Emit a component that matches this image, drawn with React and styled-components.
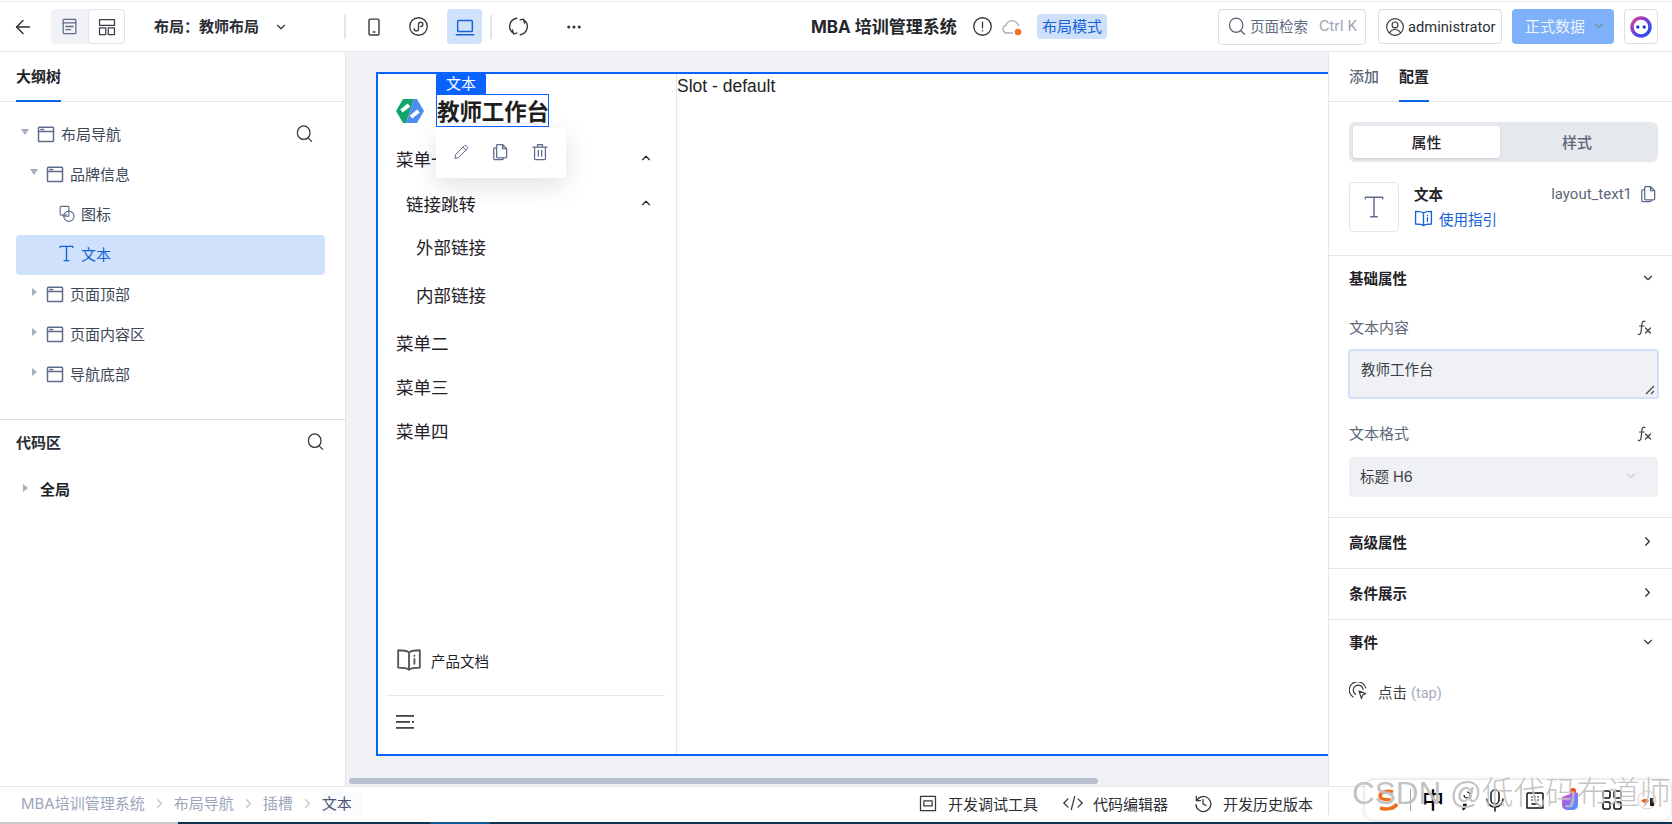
import React from 'react';
import styled, { createGlobalStyle } from 'styled-components';
import { ArrowLeft, ChevronDown, ChevronRight, ChevronUp, Ellipsis } from 'lucide-react';

const GlobalStyle = createGlobalStyle`
  html, body { margin: 0; padding: 0; background: #fff; }
  * { box-sizing: border-box; }
  body {
    font-family: Inter, "Noto Sans CJK SC", sans-serif;
    color: #1f2329;
    overflow: hidden;
  }
`;

const Page = styled.div`
  position: relative;
  width: 1672px;
  height: 824px;
  overflow: hidden;
  display: flex;
  flex-direction: column;
  background: #fff;
`;

/* header */
const Header = styled.header`
  height: 51px;
  flex: none;
  display: flex;
  align-items: center;
  padding: 0 14px 0 16px;
  border-top: 1px solid #ececef;
  margin-top: 1px;
  border-bottom: 1px solid #e4e6eb;
`;

const BackButton = styled.span`
  display: flex;
  width: 22px;
  margin-left: -4px;
  color: #2b2f36;
  margin-right: 17px;
`;

const ViewSwitch = styled.div`
  display: flex;
  height: 35px;
  width: 74px;
  background: #f0f2f6;
  border-radius: 4px;
`;

const ViewOption = styled.span`
  width: 37px;
  display: flex;
  align-items: center;
  justify-content: center;
  border-radius: 4px;
  border: 1px solid ${(p) => (p.$active ? '#dfe2e8' : 'transparent')};
  background: ${(p) => (p.$active ? '#fff' : 'transparent')};
`;

const LayoutName = styled.span`
  margin-left: 29px;
  width: 120px;
  font-size: 15px;
  font-weight: 700;
  color: #2a2d33;
  white-space: nowrap;
  padding-bottom: 2px;
`;

const SmallChevron = styled(ChevronDown)`
  width: 14px;
  height: 14px;
  color: ${(p) => p.$color || '#333'};
  flex: none;
`;

const VRule = styled.span`
  width: 2px;
  height: 24px;
  background: #e3e5ea;
  margin: 0 ${(p) => p.$right || 0}px 0 ${(p) => p.$left || 0}px;
  flex: none;
`;

const DeviceButton = styled.span`
  width: 35px;
  height: 35px;
  margin-right: ${(p) => p.$gap || 0}px;
  border-radius: 4px;
  display: flex;
  align-items: center;
  justify-content: center;
  background: ${(p) => (p.$active ? '#d0e1fb' : 'transparent')};
  color: #2f3238;
`;

const CenterGroup = styled.div`
  display: flex;
  align-items: center;
  margin-left: 220px;
`;

const AppTitle = styled.span`
  font-size: 17px;
  font-weight: 700;
  color: #23262b;
  white-space: nowrap;
  width: 161px;
  padding-bottom: 2px;
`;

const Badge = styled.span`
  margin-left: 12px;
  height: 25px;
  width: 70px;
  display: flex;
  align-items: center;
  justify-content: center;
  padding-bottom: 2px;
  font-size: 15px;
  color: #1561d8;
  background: #cfe0fb;
  border-radius: 4px;
`;

const RightGroup = styled.div`
  margin-left: auto;
  display: flex;
  align-items: center;
`;

const SearchBox = styled.div`
  width: 148px;
  height: 36px;
  border: 1px solid #dcdfe6;
  border-radius: 4px;
  display: flex;
  align-items: center;
  padding: 0 0 2px 8px;
  font-size: 14.5px;
  color: #5f6b7f;
  white-space: nowrap;
`;

const Shortcut = styled.span`
  margin-left: 11px;
  color: #9aa3b2;
`;

const UserBox = styled.div`
  width: 124px;
  height: 35px;
  margin-left: 12px;
  border: 1px solid #dcdfe6;
  border-radius: 4px;
  display: flex;
  align-items: center;
  padding-left: 6px;
  gap: 3px;
  font-family: Roboto, sans-serif;
  font-size: 14.7px;
  color: #2b2f36;
`;

const DataButton = styled.div`
  width: 102px;
  height: 35px;
  margin-left: 10px;
  border-radius: 4px;
  background: #7fb0fa;
  color: #eef4ff;
  font-size: 15px;
  display: flex;
  align-items: center;
  padding: 0 0 2px 13px;
  gap: 7px;
`;

const LogoButton = styled.div`
  width: 34px;
  height: 35px;
  margin-left: 10px;
  border: 1px solid #dcdfe6;
  border-radius: 4px;
  display: flex;
  align-items: center;
  justify-content: center;
`;

/* body */
const Body = styled.div`
  flex: 1;
  min-height: 0;
  display: flex;
`;

const LeftPanel = styled.aside`
  width: 346px;
  flex: none;
  display: flex;
  flex-direction: column;
  border-right: 1px solid #e4e6eb;
`;

const TabBar = styled.div`
  height: 50px;
  flex: none;
  display: flex;
  gap: 20px;
  padding-left: ${(p) => p.$inset}px;
  border-bottom: 1px solid #e4e6eb;
`;

const Tab = styled.span`
  height: 50px;
  display: flex;
  align-items: center;
  padding-bottom: 2px;
  font-size: 15px;
  font-weight: ${(p) => (p.$active ? 600 : 500)};
  color: ${(p) => (p.$active ? '#1f2329' : '#5c6778')};
  border-bottom: 2px solid ${(p) => (p.$active ? '#0b63e5' : 'transparent')};
`;

const TreeArea = styled.div`
  height: 318px;
  flex: none;
  padding-top: 13px;
  border-bottom: 1px solid #d9dce3;
`;

const TreeRow = styled.div`
  position: relative;
  height: 40px;
  margin: 0 20px 0 16px;
  display: flex;
  align-items: center;
  padding-left: ${(p) => [3, 12, 24][p.$level]}px;
  padding-bottom: 3px;
  border-radius: 4px;
  font-size: 15px;
  color: ${(p) => (p.$selected ? '#1561d8' : '#3d4757')};
  background: ${(p) => (p.$selected ? '#d0e1fb' : 'transparent')};
`;

const Caret = styled.span`
  width: 12px;
  flex: none;
  display: flex;
  justify-content: center;
  margin-right: ${(p) => p.$gap || 5}px;
  margin-top: ${(p) => (p.$flat ? 0 : -4)}px;
`;

const TreeLabel = styled.span`
  margin-left: 5px;
`;

const RowAction = styled.span`
  position: absolute;
  right: 11px;
  top: 9px;
  display: flex;
`;

const SectionHead = styled.div`
  height: 45px;
  padding: 0 20px 2px 16px;
  display: flex;
  align-items: center;
  justify-content: space-between;
  font-size: 15px;
  font-weight: 600;
  color: #2a2d33;
`;

const GlobalRow = styled.div`
  height: 40px;
  margin-top: 3px;
  display: flex;
  align-items: center;
  padding-left: 19px;
  font-size: 15px;
  font-weight: 700;
  color: #1f2329;
`;

const Canvas = styled.main`
  position: relative;
  flex: 1;
  min-width: 0;
  background: #f0f2f6;
  padding: 20px 0 0 30px;
  overflow: hidden;
`;

const Frame = styled.div`
  width: 1000px;
  height: 684px;
  background: #fff;
  border: 2px solid #0b63ff;
  border-right: none;
  display: flex;
`;

const SideNav = styled.nav`
  position: relative;
  width: 299px;
  flex: none;
  display: flex;
  flex-direction: column;
  border-right: 1px solid #e4e6eb;
`;

const Brand = styled.div`
  display: flex;
  align-items: center;
  height: 33px;
  margin: 20px 0 0 18px;
  gap: 12px;
`;

const BrandTextBox = styled.div`
  position: relative;
  height: 33px;
  width: 113px;
  border: 1px solid #0b63ff;
  display: flex;
  align-items: center;
  padding-bottom: 2px;
  font-size: 22.5px;
  font-weight: 700;
  color: #1f1f1f;
  white-space: nowrap;
  letter-spacing: -0.1px;
`;

const SelectionTag = styled.span`
  position: absolute;
  left: -1px;
  top: -22px;
  width: 50px;
  height: 21px;
  padding-bottom: 2px;
  background: #0b63ff;
  color: #fff;
  font-size: 15px;
  font-weight: 400;
  border-radius: 3px 3px 0 0;
  display: flex;
  align-items: center;
  justify-content: center;
`;

const FloatTools = styled.div`
  position: absolute;
  left: -1px;
  top: 33px;
  width: 130px;
  height: 50px;
  background: #fff;
  border-radius: 4px;
  box-shadow: 0 8px 24px rgba(40, 50, 70, 0.14);
  display: flex;
  align-items: center;
  padding: 0 0 2px 16px;
  gap: 20px;
  z-index: 2;
`;

const MenuList = styled.div`
  margin-top: 12px;
`;

const MenuItem = styled.div`
  height: 40px;
  margin-top: ${(p) => p.$top || 0}px;
  padding: 0 23px 2px ${(p) => 18 + (p.$depth || 0) * 10}px;
  display: flex;
  align-items: center;
  justify-content: space-between;
  font-size: 17.5px;
  color: #1f2329;
`;

const NavFooter = styled.div`
  margin-top: auto;
`;

const DocLink = styled.div`
  display: flex;
  align-items: center;
  gap: 9px;
  padding-left: 18px;
  height: 34px;
  font-size: 14.5px;
  color: #1f2329;
  margin-bottom: 18px;
`;

const NavToggle = styled.div`
  margin: 0 11px 0 8px;
  height: 59px;
  padding: 0 0 6px 10px;
  display: flex;
  align-items: center;
  border-top: 1px solid #e6e8ec;
`;

const SlotText = styled.div`
  font-family: "Liberation Sans", sans-serif;
  font-size: 17.5px;
  line-height: 20px;
  padding-top: 2px;
  color: #222;
`;

const ScrollThumb = styled.div`
  position: absolute;
  left: 3px;
  bottom: 2px;
  width: 749px;
  height: 6px;
  border-radius: 3px;
  background: #b9c1ce;
`;

/* right panel */
const RightPanel = styled.aside`
  width: 344px;
  flex: none;
  display: flex;
  flex-direction: column;
  border-left: 1px solid #e4e6eb;
  background: #fff;
`;

const Segmented = styled.div`
  margin: 20px 14px 0 20px;
  height: 40px;
  padding: 4px;
  display: flex;
  border-radius: 6px;
  background: #e5e8ec;
`;

const Segment = styled.span`
  flex: ${(p) => (p.$active ? '0 0 147px' : 1)};
  display: flex;
  align-items: center;
  justify-content: center;
  padding-bottom: 2px;
  font-size: 15px;
  font-weight: 500;
  color: ${(p) => (p.$active ? '#1f2329' : '#5c6778')};
  background: ${(p) => (p.$active ? '#fff' : 'transparent')};
  border-radius: 3px;
  box-shadow: ${(p) => (p.$active ? '0 1px 2px rgba(0,0,0,.12)' : 'none')};
`;

const ComponentInfo = styled.div`
  margin: 20px 14px 0 20px;
  height: 73px;
  display: flex;
`;

const TypeTile = styled.div`
  width: 50px;
  height: 50px;
  border: 1px solid #e4e6eb;
  border-radius: 4px;
  display: flex;
  align-items: center;
  justify-content: center;
  flex: none;
`;

const InfoText = styled.div`
  margin-left: 15px;
  flex: 1;
`;

const InfoLine = styled.div`
  height: 25px;
  display: flex;
  align-items: center;
  justify-content: space-between;
  padding-bottom: 2px;
`;

const InfoName = styled.span`
  font-size: 14.5px;
  font-weight: 600;
`;

const InfoKey = styled.span`
  display: flex;
  align-items: center;
  gap: 6px;
  font-family: Roboto, sans-serif;
  font-size: 15px;
  color: #5c6778;
`;

const GuideLink = styled.span`
  display: flex;
  align-items: center;
  gap: 6px;
  font-size: 14.5px;
  color: #1561d8;
`;

const Section = styled.section`
  border-top: 1px solid #e4e6eb;
  padding: 0 14px 0 20px;
  height: ${(p) => p.$height}px;
`;

const SectionTitle = styled.div`
  height: ${(p) => p.$height || 46}px;
  display: flex;
  align-items: center;
  justify-content: space-between;
  padding: 0 3px 3px 0;
  font-size: 14.5px;
  font-weight: 600;
  color: #1f2329;
`;

const FieldLabel = styled.div`
  height: 20px;
  margin-top: ${(p) => p.$top}px;
  display: flex;
  align-items: center;
  justify-content: space-between;
  padding: 0 5px 3px 0;
  font-size: 15px;
  color: #5c6778;
`;

const TextArea = styled.div`
  position: relative;
  height: 50px;
  margin: 11px 0 0 -1px;
  width: 311px;
  padding: 7px 11px;
  background: #f0f1f5;
  border: 2px solid #cfe0fb;
  border-radius: 4px;
  font-size: 14.5px;
  color: #3a3f47;
`;

const ResizeGrip = styled.span`
  position: absolute;
  right: 2px;
  bottom: 2px;
  display: flex;
`;

const SelectBox = styled.div`
  height: 40px;
  margin-top: 13px;
  padding: 0 20px 3px 11px;
  background: #f0f1f5;
  border-radius: 4px;
  display: flex;
  align-items: center;
  justify-content: space-between;
  font-size: 14.5px;
  color: #3a3f47;
`;

const EventRow = styled.div`
  display: flex;
  align-items: center;
  gap: 9px;
  margin-top: 15px;
  font-size: 14.5px;
  color: #3a3f47;
`;

const Muted = styled.span`
  color: #a3aec0;
  margin-left: 4px;
  font-family: Roboto, sans-serif;
`;

/* bottom bar */
const StatusBar = styled.footer`
  height: 36px;
  flex: none;
  border-top: 1px solid #e4e6eb;
  display: flex;
  align-items: center;
  padding: 0 359px 3px 21px;
  font-size: 15px;
`;

const Crumbs = styled.div`
  display: flex;
  align-items: center;
`;

const Crumb = styled.span`
  color: ${(p) => (p.$current ? '#4a5672' : '#9ba6ba')};
  background: ${(p) => (p.$current ? '#fafbfc' : 'transparent')};
  padding-right: ${(p) => (p.$current ? 10 : 0)}px;
  line-height: 23px;
`;

const CrumbArrow = styled(ChevronRight)`
  width: 15px;
  height: 15px;
  color: #bcc4d2;
  margin: 0 7px;
`;

const Tools = styled.div`
  margin-left: auto;
  display: flex;
  align-items: center;
  gap: 25px;
`;

const ToolItem = styled.span`
  display: flex;
  align-items: center;
  gap: 10px;
  color: #2a2d33;
`;

const StatusRule = styled.span`
  position: absolute;
  left: 1328px;
  bottom: 9px;
  width: 1px;
  height: 24px;
  background: #e0e2e7;
`;

const TaskbarEdge = styled.div`
  height: 2px;
  flex: none;
  background: linear-gradient(90deg, #c4c7cc 0, #c4c7cc 178px, #0c3450 178px, #0c3450 430px, #0b5a94 430px, #0b5a94 490px, #0c3450 490px);
`;

/* overlays that belong to the desktop, not the page */
const ImeBar = styled.div`
  position: absolute;
  left: 1365px;
  top: 780px;
  width: 306px;
  height: 40px;
  background: #fff;
  border-radius: 9px;
  box-shadow: 0 0 4px rgba(0, 0, 0, 0.2);
  display: flex;
  align-items: center;
  padding-left: 12px;
`;

const ImeRule = styled.span`
  width: 1px;
  height: 22px;
  margin: 0 11px;
  background: #aaa;
`;

const ImeChar = styled.span`
  width: ${(p) => p.$width}px;
  font-size: 22px;
  font-weight: 500;
  color: #000;
  line-height: 1;
`;

const ImeIcon = styled.span`
  width: ${(p) => p.$width}px;
  display: flex;
`;

const Watermark = styled.div`
  position: absolute;
  left: 1352px;
  top: 773px;
  font-family: "Liberation Sans", "Noto Sans CJK SC", sans-serif;
  font-size: 31.5px;
  font-weight: 300;
  line-height: 40px;
  white-space: nowrap;
  color: rgba(135, 135, 135, 0.5);
  text-shadow: 0 0 1px #fff;
  pointer-events: none;
`;

const I = ({ s = 18, w, h, vb = '0 0 24 24', c = '#5c6b8a', sw = 1.6, children }) => (
  <svg width={w || s} height={h || s} viewBox={vb} fill="none" stroke={c} strokeWidth={sw} strokeLinecap="round" strokeLinejoin="round" style={{ flex: 'none' }}>
    {children}
  </svg>
);

const SearchIcon = ({ s = 19, c = '#33373d' }) => (
  <I s={s} c={c} sw={1.6}>
    <ellipse cx="11" cy="11" rx="8" ry="8.5" />
    <path d="M16.5 17.5 21 22" />
  </I>
);

const WindowIcon = () => (
  <I s={20} sw={1.8}>
    <rect x="3" y="4" width="18" height="17" rx="1" />
    <path d="M3 9h18M6 6.6h3" />
  </I>
);

const TextGlyph = ({ s = 18, c = '#1561d8', sw = 1.7 }) => (
  <I s={s} c={c} sw={sw}>
    <path d="M4 4.5V3h16v1.5M12 3v18M9 21h6" />
  </I>
);

const CopyIcon = ({ s = 18, c = '#5c6b8a' }) => (
  <I s={s} c={c} sw={1.5}>
    <path d="M9 3h6l5 5v10a1 1 0 0 1-1 1H9a1 1 0 0 1-1-1V4a1 1 0 0 1 1-1zM15 3v5h5M8 7H5.500a1 1 0 0 0-1 1v12a1 1 0 0 0 1 1H15a1 1 0 0 0 1-1v-1" />
  </I>
);

const BookIcon = ({ s = 26, c = '#555', dot = '#555' }) => (
  <I s={s} c={c} sw={1.7}>
    <path d="M12 5C10 3.500 6 3 2 3v16c4 0 8 .3 10 2 2-1.700 6-2 10-2V3c-4 0-8 .5-10 2zM12 5v16" />
    <path d="M17 8v.2M17 11v4.500" stroke={dot} />
  </I>
);

const FxIcon = () => (
  <svg width="18" height="18" viewBox="0 0 18 18" fill="none" stroke="#3a3f47" strokeWidth="1.2" strokeLinecap="round" style={{ flex: 'none', marginBottom: -3 }}>
    <path d="M10 2.500C8 1.500 7.200 3 7 5l-1 8c-.3 2-1.300 3-2.800 2.300M4.500 7H9" />
    <path d="M10.500 9l5 5M15.500 9l-5 5" />
  </svg>
);

const TreeCaret = ({ open }) => (
  <svg width="10" height="10" viewBox="0 0 10 10" fill="#a6afc0">
    {open ? <path d="M1 2h8L5 8z" /> : <path d="M3 1l5 4-5 4z" />}
  </svg>
);

const TREE = [
  { level: 0, label: '布局导航', open: true, icon: 'window', search: true },
  { level: 1, label: '品牌信息', open: true, icon: 'window' },
  { level: 2, label: '图标', icon: 'shape' },
  { level: 2, label: '文本', icon: 'text', selected: true },
  { level: 1, label: '页面顶部', icon: 'window', closed: true },
  { level: 1, label: '页面内容区', icon: 'window', closed: true },
  { level: 1, label: '导航底部', icon: 'window', closed: true },
];

const MENU = [
  { label: '菜单一', top: 0, arrow: true },
  { label: '链接跳转', top: 5, depth: 1, arrow: true },
  { label: '外部链接', top: 3, depth: 2 },
  { label: '内部链接', top: 8, depth: 2 },
  { label: '菜单二', top: 8 },
  { label: '菜单三', top: 4 },
  { label: '菜单四', top: 4 },
];

const treeIcon = (row) => {
  if (row.icon === 'window') return <WindowIcon />;
  if (row.icon === 'text') return <TextGlyph s={19} />;
  return (
    <I s={19} sw={1.4}>
      <path d="M12 14H5a1 1 0 0 1-1-1V4a1 1 0 0 1 1-1h9a1 1 0 0 1 1 1v5" />
      <circle cx="15" cy="15.500" r="6.500" />
      <path d="M8.500 15.500H15V9" />
    </I>
  );
};

export default function App() {
  return (
    <Page>
      <GlobalStyle />
      <Header>
        <BackButton><ArrowLeft size={22} strokeWidth={1.5} /></BackButton>
        <ViewSwitch>
          <ViewOption>
            <I s={19} sw={1.6}>
              <rect x="4" y="3" width="16" height="18" rx="1" />
              <path d="M4 7.500h16M7.500 12h9M7.500 16h6" />
            </I>
          </ViewOption>
          <ViewOption $active>
            <I s={20} c="#3a3f47" sw={1.5}>
              <rect x="3" y="3" width="18" height="7" />
              <rect x="3" y="13" width="7.500" height="8" />
              <rect x="13.500" y="13" width="7.500" height="8" />
            </I>
          </ViewOption>
        </ViewSwitch>
        <LayoutName>布局：教师布局</LayoutName>
        <SmallChevron />
        <VRule $left={56} $right={10} />
        <DeviceButton $gap={10}>
          <I s={20} c="#33373d" sw={1.7}>
            <rect x="6" y="2.500" width="12" height="19" rx="1.500" />
            <path d="M11 18h2" />
          </I>
        </DeviceButton>
        <DeviceButton $gap={11}>
          <I s={21} c="#33373d" sw={1.5}>
            <circle cx="12" cy="12" r="10" />
            <path d="M7 14.500a2.500 2.500 0 0 0 5 0v-5a2.500 2.500 0 1 1 2.500 2.500M14.500 12" />
          </I>
        </DeviceButton>
        <DeviceButton $active>
          <I s={22} c="#1561d8" sw={1.6}>
            <rect x="4" y="5" width="16" height="12" rx="1" />
            <path d="M2.500 20.500h19" />
          </I>
        </DeviceButton>
        <VRule $left={8} $right={9} />
        <DeviceButton $gap={20}>
          <I s={21} c="#33373d" sw={1.6}>
            <path d="M10 2.500A9.500 9.500 0 0 0 6.500 20M14 21.500A9.500 9.500 0 0 0 17.500 4M5 16l1.500 4.500 3.500-1M19 8l-1.500-4.500-3.500 1" />
          </I>
        </DeviceButton>
        <DeviceButton><Ellipsis size={18} /></DeviceButton>

        <CenterGroup>
          <AppTitle>MBA 培训管理系统</AppTitle>
          <I s={21} c="#33373d" sw={1.5}>
            <circle cx="12" cy="12" r="10" />
            <path d="M12 7v6.500M12 16.800v.2" />
          </I>
          <svg width="24" height="22" viewBox="0 0 24 22" fill="none" stroke="#a6afc0" strokeWidth="1.4" style={{ marginLeft: 8 }}>
            <path d="M12 17H6a4 4 0 0 1-.7-7.900A6 6 0 0 1 16.500 8a4.500 4.500 0 0 1 1 2" />
            <circle cx="17" cy="16" r="3.300" fill="#f0702c" stroke="none" />
          </svg>
          <Badge>布局模式</Badge>
        </CenterGroup>

        <RightGroup>
          <SearchBox>
            <SearchIcon s={20} c="#5c6778" />
            <span style={{ marginLeft: 3 }}>页面检索</span>
            <Shortcut>Ctrl K</Shortcut>
          </SearchBox>
          <UserBox>
            <I s={20} c="#33373d" sw={1.4}>
              <circle cx="12" cy="12" r="10" />
              <circle cx="12" cy="9.500" r="3.500" />
              <path d="M5.500 19c1.500-3 4-4 6.500-4s5 1 6.500 4" />
            </I>
            administrator
          </UserBox>
          <DataButton>
            正式数据
            <SmallChevron $color="#7a8ba5" />
          </DataButton>
          <LogoButton>
            <svg width="24" height="24" viewBox="0 0 24 24">
              <defs>
                <linearGradient id="robot" x1="0" y1="0" x2="1" y2="1">
                  <stop offset="0" stopColor="#e0428e" />
                  <stop offset="0.5" stopColor="#6a3fe0" />
                  <stop offset="1" stopColor="#1456e8" />
                </linearGradient>
              </defs>
              <circle cx="12" cy="12" r="9" fill="#fff" stroke="url(#robot)" strokeWidth="3.500" />
              <circle cx="8.800" cy="12" r="1.700" fill="#1a3fd0" />
              <circle cx="15.200" cy="12" r="1.700" fill="#1a3fd0" />
            </svg>
          </LogoButton>
        </RightGroup>
      </Header>

      <Body>
        <LeftPanel>
          <TabBar $inset={16}>
            <Tab $active>大纲树</Tab>
          </TabBar>
          <TreeArea>
            {TREE.map((row) => (
              <TreeRow key={row.label} $level={row.level} $selected={row.selected}>
                <Caret>{row.open && <TreeCaret open />}{row.closed && <TreeCaret />}</Caret>
                {treeIcon(row)}
                <TreeLabel>{row.label}</TreeLabel>
                {row.search && <RowAction><SearchIcon /></RowAction>}
              </TreeRow>
            ))}
          </TreeArea>
          <SectionHead>
            代码区
            <SearchIcon />
          </SectionHead>
          <GlobalRow>
            <Caret $gap={9} $flat><TreeCaret /></Caret>
            全局
          </GlobalRow>
        </LeftPanel>

        <Canvas>
          <Frame>
            <SideNav>
              <Brand>
                <svg width="28" height="24" viewBox="0 0 28 24">
                  <path d="M7 0h11l-8 24H7L0 12z" fill="#12a56b" />
                  <path d="M18 0h3l7 12-7 12H10z" fill="#4c8bf0" />
                  <path d="M5.500 12 13 6M15 18l7.500-6" stroke="#fff" strokeWidth="4" />
                </svg>
                <BrandTextBox>
                  教师工作台
                  <SelectionTag>文本</SelectionTag>
                  <FloatTools>
                    <I s={18} sw={1.3}>
                      <path d="M4 20l1-5L16.500 3.500a1.500 1.500 0 0 1 2.200 0l1.800 1.800a1.500 1.500 0 0 1 0 2.200L9 19z M14.500 5.500l4 4" />
                    </I>
                    <CopyIcon s={20} />
                    <I s={20} sw={1.5}>
                      <path d="M3.500 6h17M9 6V3h6v3M5.500 6v14a1 1 0 0 0 1 1h11a1 1 0 0 0 1-1V6M10 10v7M14 10v7" />
                    </I>
                  </FloatTools>
                </BrandTextBox>
              </Brand>
              <MenuList>
                {MENU.map((item) => (
                  <MenuItem key={item.label} $top={item.top} $depth={item.depth}>
                    {item.label}
                    {item.arrow && <ChevronUp size={14} strokeWidth={2} />}
                  </MenuItem>
                ))}
              </MenuList>
              <NavFooter>
                <DocLink>
                  <BookIcon />
                  产品文档
                </DocLink>
                <NavToggle>
                  <svg width="18" height="14" viewBox="0 0 18 14" fill="#444">
                    <rect width="18" height="1.800" />
                    <rect y="6" width="14" height="1.800" />
                    <rect x="16" y="6" width="2" height="1.800" />
                    <rect y="12" width="18" height="1.800" />
                  </svg>
                </NavToggle>
              </NavFooter>
            </SideNav>
            <SlotText>Slot - default</SlotText>
          </Frame>
          <ScrollThumb />
        </Canvas>

        <RightPanel>
          <TabBar $inset={20}>
            <Tab>添加</Tab>
            <Tab $active>配置</Tab>
          </TabBar>
          <Segmented>
            <Segment $active>属性</Segment>
            <Segment>样式</Segment>
          </Segmented>
          <ComponentInfo>
            <TypeTile><TextGlyph s={26} c="#5c6b8a" sw={1.3} /></TypeTile>
            <InfoText>
              <InfoLine>
                <InfoName>文本</InfoName>
                <InfoKey>layout_text1<CopyIcon s={20} /></InfoKey>
              </InfoLine>
              <InfoLine>
                <GuideLink><BookIcon s={19} c="#1561d8" dot="#1561d8" />使用指引</GuideLink>
              </InfoLine>
            </InfoText>
          </ComponentInfo>
          <Section $height={262}>
            <SectionTitle>基础属性<SmallChevron /></SectionTitle>
            <FieldLabel $top={16}>文本内容<FxIcon /></FieldLabel>
            <TextArea>
              教师工作台
              <ResizeGrip>
                <svg width="10" height="10" viewBox="0 0 10 10" stroke="#444" strokeWidth="1.200">
                  <path d="M1 9 9 1M6 9l3-3" />
                </svg>
              </ResizeGrip>
            </TextArea>
            <FieldLabel $top={25}>文本格式<FxIcon /></FieldLabel>
            <SelectBox>标题 H6<SmallChevron $color="#c8ccd4" /></SelectBox>
          </Section>
          <Section $height={51}>
            <SectionTitle $height={50}>高级属性<ChevronRight size={15} strokeWidth={1.8} /></SectionTitle>
          </Section>
          <Section $height={51}>
            <SectionTitle $height={50}>条件展示<ChevronRight size={15} strokeWidth={1.8} /></SectionTitle>
          </Section>
          <Section $height={120}>
            <SectionTitle $height={46}>事件<SmallChevron /></SectionTitle>
            <EventRow>
              <I s={20} c="#33373d" sw={1.4}>
                <path d="M12 11l8 3-3.500 1.500L15 20z" />
                <path d="M8 15a6 6 0 1 1 9-6M5 18A10 10 0 1 1 20 7" />
              </I>
              <span>点击<Muted>(tap)</Muted></span>
            </EventRow>
          </Section>
        </RightPanel>
      </Body>

      <StatusBar>
        <Crumbs>
          <Crumb>MBA培训管理系统</Crumb>
          <CrumbArrow />
          <Crumb>布局导航</Crumb>
          <CrumbArrow />
          <Crumb>插槽</Crumb>
          <CrumbArrow />
          <Crumb $current>文本</Crumb>
        </Crumbs>
        <Tools>
          <ToolItem>
            <I s={20} c="#33373d" sw={1.5}>
              <rect x="3" y="4" width="18" height="17" />
              <path d="M7 9.500h10v6H7z" />
            </I>
            开发调试工具
          </ToolItem>
          <ToolItem>
            <I s={20} c="#33373d" sw={1.5}>
              <path d="M6 7l-5 5 5 5M18 7l5 5-5 5M14 4l-4 16" />
            </I>
            代码编辑器
          </ToolItem>
          <ToolItem>
            <I s={20} c="#33373d" sw={1.5}>
              <path d="M4 4v5h5M4.500 9a9 9 0 1 1-1 5M12 7.500V13l3.500 2" />
            </I>
            开发历史版本
          </ToolItem>
        </Tools>
      </StatusBar>
      <StatusRule />
      <TaskbarEdge />

      <ImeBar>
        <ImeIcon $width={22}>
          <svg width="22" height="24" viewBox="0 0 22 24" fill="none" stroke="#ec6f1b" strokeWidth="3.500">
            <path d="M3 20c6 2 14 1 17-4" />
            <path d="M16 4C10 2 3 4 3 8c0 3 6 4 11 4" />
          </svg>
        </ImeIcon>
        <ImeRule />
        <ImeChar $width={36}>中</ImeChar>
        <ImeIcon $width={25}>
          <svg width="16" height="22" viewBox="0 0 16 22" fill="none" stroke="#111">
            <path d="M9 3a3 3 0 1 1-3 3" strokeWidth="1.200" />
            <path d="M5 16h2.500c0 2-1 3.500-3 4.500" strokeWidth="2.400" />
          </svg>
        </ImeIcon>
        <ImeIcon $width={40}>
          <I s={24} c="#111" sw={1.5}>
            <rect x="8" y="2" width="8" height="14" rx="4" />
            <path d="M4 11a8 8 0 0 0 16 0M12 19v4" />
          </I>
        </ImeIcon>
        <ImeIcon $width={36}>
          <I s={24} c="#111" sw={1.5}>
            <path d="M5 5h14a1 1 0 0 1 1 1v14H4V6a1 1 0 0 1 1-1zM9 9h.1M12 9h.1M15 9h.1M9 12h.1M12 12h.1M15 12h.1M9 16h6" />
          </I>
        </ImeIcon>
        <ImeIcon $width={41}>
          <svg width="22" height="24" viewBox="0 0 22 24">
            <defs>
              <linearGradient id="ime" x1="0" y1="0" x2="1" y2="1">
                <stop offset="0" stopColor="#e83bd0" />
                <stop offset="1" stopColor="#3aa0ff" />
              </linearGradient>
            </defs>
            <path d="M3 9l8-3v-3l8 2v12a5 5 0 0 1-5 5H8a5 5 0 0 1-5-5z" fill="url(#ime)" />
            <circle cx="14" cy="3" r="3" fill="#ee4b2b" />
          </svg>
        </ImeIcon>
        <ImeIcon $width={37}>
          <I s={24} c="#111" sw={1.6}>
            <rect x="3" y="3" width="7" height="7" rx="1.500" />
            <rect x="14" y="3" width="7" height="7" rx="1.500" />
            <rect x="3" y="14" width="7" height="7" rx="1.500" />
            <rect x="14" y="14" width="7" height="7" rx="1.500" />
          </I>
        </ImeIcon>
        <ImeIcon $width={20}>
          <svg width="20" height="20" viewBox="0 0 20 20">
            <circle cx="10" cy="10" r="9" fill="#fff" stroke="#f0c8b8" />
            <path d="M4 11c3-3 6-3 8 0l-3 3z" fill="#e8641a" />
            <path d="M13 8h4v8h-4z" fill="#222" />
          </svg>
        </ImeIcon>
      </ImeBar>
      <Watermark>CSDN @低代码布道师</Watermark>
    </Page>
  );
}
